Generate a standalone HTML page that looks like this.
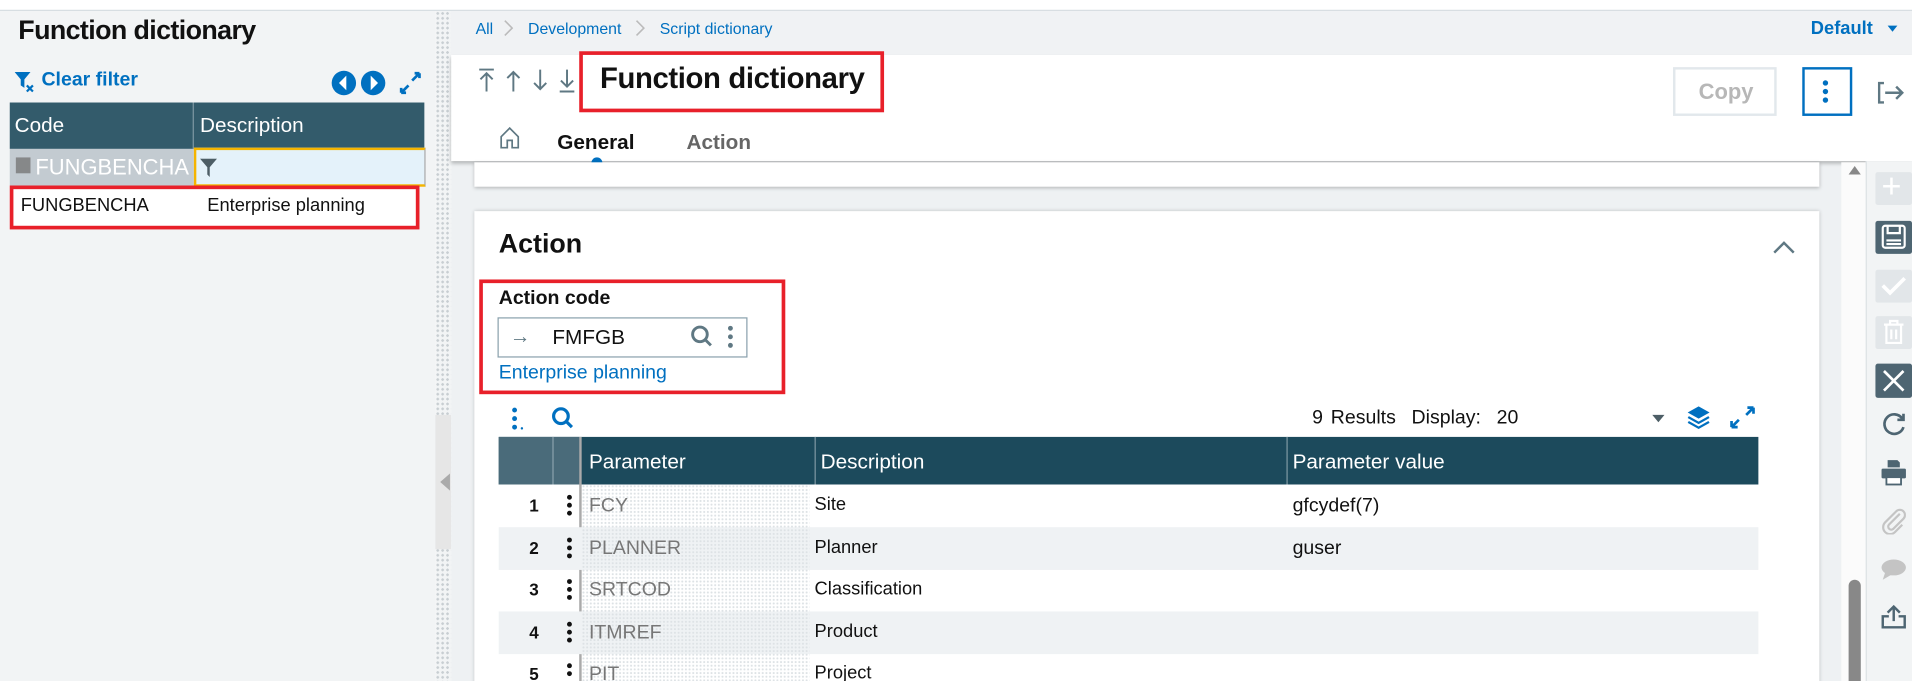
<!DOCTYPE html>
<html><head><meta charset="utf-8">
<style>
html,body{margin:0;padding:0;width:1912px;height:681px;overflow:hidden;background:#fff;font-family:"Liberation Sans",Arial,sans-serif;}
#w{position:absolute;left:0;top:0;width:1568px;height:558px;transform:scale(1.2194,1.2204);transform-origin:0 0;background:#fff;overflow:hidden;}
.a{position:absolute;}
.t{position:absolute;white-space:nowrap;}
</style></head><body><div id="w">
<div class="a" style="left:0;top:0;width:1568px;height:8px;background:#fff;border-bottom:1px solid #d6dde2"></div>
<div class="a" style="left:0;top:9px;width:357px;height:549px;background:#f2f4f5"></div>
<div class="t" style="left:15px;top:12px;font-size:22px;font-weight:bold;color:#111;letter-spacing:-0.5px">Function dictionary</div>
<svg class="a" style="left:12px;top:59px" width="18" height="18" viewBox="0 0 18 18"><path d="M0 0H13L8 6V13L5 11V6Z" fill="#0070c0"/><path d="M10 11l5 5M15 11l-5 5" stroke="#0070c0" stroke-width="1.8"/></svg>
<div class="t" style="left:34px;top:57px;font-size:16px;font-weight:bold;color:#0070c0">Clear filter</div>
<svg class="a" style="left:271px;top:57px" width="76" height="22" viewBox="0 0 76 22"><circle cx="11" cy="11" r="10" fill="#0070c0"/><path d="M13 5L7 11L13 17Z" fill="#fff"/><circle cx="35" cy="11" r="10" fill="#0070c0"/><path d="M33 5L39 11L33 17Z" fill="#fff"/><path d="M58 19L64 13M58 19V15M58 19H62M73 3L67 9M73 3V7M73 3H69" stroke="#0070c0" stroke-width="2.2" fill="none"/></svg>
<div class="a" style="left:8px;top:84px;width:340px;height:38px;background:#335b6b"></div>
<div class="a" style="left:158px;top:84px;width:1px;height:38px;background:#7e98a3"></div>
<div class="t" style="left:12px;top:93px;font-size:17px;color:#fff">Code</div>
<div class="t" style="left:164px;top:93px;font-size:17px;color:#fff">Description</div>
<div class="a" style="left:8px;top:122px;width:151px;height:30px;background:#c3cbd1"></div>
<div class="a" style="left:13px;top:129px;width:12px;height:13px;background:#777;opacity:.8"></div>
<div class="t" style="left:29px;top:127px;font-size:18px;color:#fff">FUNGBENCHA</div>
<div class="a" style="left:159px;top:121px;width:187px;height:28px;background:#e4f2fa;border:2px solid #f5b400;border-right:1px solid #aaa"></div>
<svg class="a" style="left:164px;top:130px" width="14" height="15" viewBox="0 0 14 15"><path d="M0 0H14L8 7V15L6 13V7Z" fill="#4d5e66"/></svg>
<div class="a" style="left:8px;top:152px;width:330px;height:30px;border:3px solid #e8202a;background:#fff"></div>
<div class="t" style="left:17px;top:160px;font-size:15px;color:#111">FUNGBENCHA</div>
<div class="t" style="left:170px;top:160px;font-size:15px;color:#111">Enterprise planning</div>
<div class="a" style="left:357px;top:9px;width:13px;height:549px;background:#f2f4f5;background-image:radial-gradient(#c8ced2 1px,transparent 1.2px);background-size:4px 4px"></div>
<div class="a" style="left:357px;top:340px;width:13px;height:110px;background:#e6e6e6"></div>
<div class="a" style="left:361px;top:388px;width:0;height:0;border-top:7px solid transparent;border-bottom:7px solid transparent;border-right:8px solid #aaa"></div>
<div class="a" style="left:370px;top:9px;width:1198px;height:549px;background:#eef1f3"></div>
<div class="a" style="left:370px;top:9px;width:1198px;height:36px;background:#f0f2f4"></div>
<div class="t" style="left:390px;top:16px;font-size:13px;color:#0070c0">All</div>
<svg class="a" style="left:413px;top:16px" width="8" height="14" viewBox="0 0 8 14" fill="none" stroke="#bbb" stroke-width="1.3"><path d="M1 1L7 7L1 13"/></svg>
<div class="t" style="left:433px;top:16px;font-size:13px;color:#0070c0">Development</div>
<svg class="a" style="left:521px;top:16px" width="8" height="14" viewBox="0 0 8 14" fill="none" stroke="#bbb" stroke-width="1.3"><path d="M1 1L7 7L1 13"/></svg>
<div class="t" style="left:541px;top:16px;font-size:13px;color:#0070c0">Script dictionary</div>
<div class="t" style="left:1485px;top:15px;font-size:15px;font-weight:bold;color:#0070c0">Default</div>
<div class="a" style="left:1548px;top:21px;border-left:4px solid transparent;border-right:4px solid transparent;border-top:5px solid #0070c0"></div>
<div class="a" style="left:370px;top:45px;width:1198px;height:87px;background:#fff;box-shadow:0 2px 3px rgba(0,0,0,.25)"></div>
<svg class="a" style="left:390px;top:55px" width="84" height="22" viewBox="0 0 84 22" fill="none" stroke="#5f7883" stroke-width="1.6"><path d="M3 2H15M9 20V5M4 10L9 5L14 10"/><path d="M31 20V4M26 9L31 4L36 9"/><path d="M53 2V18M48 13L53 18L58 13"/><path d="M75 2V16M70 11L75 16L80 11M69 20H81"/></svg>
<div class="a" style="left:475px;top:42px;width:244px;height:44px;border:3px solid #e8202a"></div>
<div class="t" style="left:492px;top:51px;font-size:24px;font-weight:bold;color:#111;letter-spacing:-0.3px">Function dictionary</div>
<div class="a" style="left:1372px;top:55px;width:81px;height:36px;border:2px solid #e2e8ec"></div>
<div class="t" style="left:1393px;top:65px;font-size:18px;font-weight:bold;color:#b7b7b7">Copy</div>
<div class="a" style="left:1478px;top:55px;width:37px;height:36px;border:2px solid #0070c0"></div>
<svg class="a" style="left:1494px;top:65px" width="6" height="20"><circle cx="3" cy="3" r="2.2" fill="#0070c0"/><circle cx="3" cy="10" r="2.2" fill="#0070c0"/><circle cx="3" cy="17" r="2.2" fill="#0070c0"/></svg>
<svg class="a" style="left:1540px;top:67px" width="22" height="18" viewBox="0 0 22 18" fill="none" stroke="#5f7883" stroke-width="2"><path d="M5 1H1V17H5M6 9H20M15 4L20 9L15 14"/></svg>
<svg class="a" style="left:410px;top:104px" width="16" height="18" viewBox="0 0 16 18" fill="none" stroke="#5f7883" stroke-width="1.4"><path d="M1 8L8 1L15 8V17H10V11H6V17H1Z"/></svg>
<div class="t" style="left:457px;top:107px;font-size:17px;font-weight:bold;color:#111">General</div>
<div class="t" style="left:563px;top:107px;font-size:17px;font-weight:bold;color:#666">Action</div>
<div class="a" style="left:485px;top:129px;width:9px;height:9px;border-radius:50%;background:#0070c0"></div>
<div class="a" style="left:389px;top:133px;width:1103px;height:20px;background:#fff;box-shadow:0 1px 3px rgba(0,0,0,.25)"></div>
<div class="a" style="left:389px;top:173px;width:1103px;height:390px;background:#fff;box-shadow:0 0 3px rgba(0,0,0,.2)"></div>
<div class="t" style="left:409px;top:187px;font-size:22px;font-weight:bold;color:#111">Action</div>
<svg class="a" style="left:1453px;top:197px" width="20" height="12" viewBox="0 0 20 12" fill="none" stroke="#5f7883" stroke-width="2"><path d="M2 10L10 2L18 10"/></svg>
<div class="a" style="left:393px;top:229px;width:245px;height:88px;border:3px solid #e8202a"></div>
<div class="t" style="left:409px;top:236px;font-size:16px;font-weight:bold;color:#111">Action code</div>
<div class="a" style="left:408px;top:260px;width:203px;height:31px;border:1px solid #8aa1ad"></div>
<div class="t" style="left:418px;top:266px;font-size:17px;color:#5f7883">→</div>
<div class="t" style="left:453px;top:267px;font-size:17px;color:#111">FMFGB</div>
<svg class="a" style="left:566px;top:266px" width="20" height="20" viewBox="0 0 20 20" fill="none" stroke="#5f7883" stroke-width="2.4"><circle cx="8" cy="8" r="6"/><path d="M12.5 12.5L17 17"/></svg>
<svg class="a" style="left:596px;top:266px" width="6" height="20"><circle cx="3" cy="3" r="2" fill="#5f7883"/><circle cx="3" cy="10" r="2" fill="#5f7883"/><circle cx="3" cy="17" r="2" fill="#5f7883"/></svg>
<div class="t" style="left:409px;top:297px;font-size:16px;color:#0070c0">Enterprise planning</div>
<svg class="a" style="left:418px;top:333px" width="12" height="20"><circle cx="4" cy="3" r="2" fill="#0070c0"/><circle cx="4" cy="10" r="2" fill="#0070c0"/><circle cx="4" cy="17" r="2" fill="#0070c0"/><circle cx="10" cy="18" r="1" fill="#0070c0"/></svg>
<svg class="a" style="left:452px;top:333px" width="20" height="20" viewBox="0 0 20 20" fill="none" stroke="#0070c0" stroke-width="2.6"><circle cx="8" cy="8" r="6"/><path d="M12.5 12.5L17 17"/></svg>
<div class="t" style="left:1076px;top:334px;font-size:16px;color:#111;word-spacing:2px">9 Results&nbsp; Display:&nbsp; 20</div>
<div class="a" style="left:1355px;top:340px;border-left:5px solid transparent;border-right:5px solid transparent;border-top:6px solid #4d5e66"></div>
<svg class="a" style="left:1383px;top:332px" width="20" height="20" viewBox="0 0 20 20" fill="#0070c0"><path d="M10 1L19 6L10 11L1 6Z"/><path d="M2 9L10 13.5L18 9L19 10.5L10 15.5L1 10.5Z"/><path d="M2 13L10 17.5L18 13L19 14.5L10 19.5L1 14.5Z"/></svg>
<svg class="a" style="left:1418px;top:332px" width="22" height="20" viewBox="0 0 22 20" fill="none" stroke="#0070c0" stroke-width="2.2"><path d="M2 18L8 12M2 18V13M2 18H7M20 2L14 8M20 2V7M20 2H15"/></svg>
<div class="a" style="left:409px;top:358px;width:1033px;height:39px;background:#1c4a5c"></div>
<div class="a" style="left:409px;top:358px;width:66px;height:39px;background:#4a6b7a"></div>
<div class="a" style="left:453px;top:358px;width:1px;height:39px;background:#8aa1ad"></div>
<div class="a" style="left:475px;top:358px;width:2px;height:200px;background:#aaa"></div>
<div class="a" style="left:668px;top:358px;width:1px;height:39px;background:#7e98a3"></div>
<div class="a" style="left:1055px;top:358px;width:1px;height:39px;background:#7e98a3"></div>
<div class="t" style="left:483px;top:369px;font-size:17px;color:#fff">Parameter</div>
<div class="t" style="left:673px;top:369px;font-size:17px;color:#fff">Description</div>
<div class="t" style="left:1060px;top:369px;font-size:17px;color:#fff">Parameter value</div>
<div class="a" style="left:409px;top:432px;width:1033px;height:35px;background:#eff2f4"></div>
<div class="a" style="left:409px;top:501px;width:1033px;height:35px;background:#eff2f4"></div>
<div class="a" style="left:477px;top:397px;width:187px;height:161px;background-image:radial-gradient(#dde2e5 0.7px,transparent 1px);background-size:3px 3px"></div>
<div class="t" style="left:434px;top:406px;font-size:14px;font-weight:bold;color:#111">1</div>
<div class="t" style="left:434px;top:441px;font-size:14px;font-weight:bold;color:#111">2</div>
<div class="t" style="left:434px;top:475px;font-size:14px;font-weight:bold;color:#111">3</div>
<div class="t" style="left:434px;top:510px;font-size:14px;font-weight:bold;color:#111">4</div>
<div class="t" style="left:434px;top:544px;font-size:14px;font-weight:bold;color:#111">5</div>
<svg class="a" style="left:464px;top:405px" width="6" height="150"><g fill="#111"><circle cx="3" cy="2.5" r="2"/><circle cx="3" cy="9" r="2"/><circle cx="3" cy="15.5" r="2"/><circle cx="3" cy="37.5" r="2"/><circle cx="3" cy="44" r="2"/><circle cx="3" cy="50.5" r="2"/><circle cx="3" cy="71.5" r="2"/><circle cx="3" cy="78" r="2"/><circle cx="3" cy="84.5" r="2"/><circle cx="3" cy="106.5" r="2"/><circle cx="3" cy="113" r="2"/><circle cx="3" cy="119.5" r="2"/><circle cx="3" cy="140.5" r="2"/><circle cx="3" cy="147" r="2"/></g></svg>
<div class="t" style="left:483px;top:406px;font-size:16px;color:#777">FCY</div>
<div class="t" style="left:483px;top:441px;font-size:16px;color:#777">PLANNER</div>
<div class="t" style="left:483px;top:475px;font-size:16px;color:#777">SRTCOD</div>
<div class="t" style="left:483px;top:510px;font-size:16px;color:#777">ITMREF</div>
<div class="t" style="left:483px;top:544px;font-size:16px;color:#777">PIT</div>
<div class="t" style="left:668px;top:405px;font-size:15px;color:#111">Site</div>
<div class="t" style="left:668px;top:440px;font-size:15px;color:#111">Planner</div>
<div class="t" style="left:668px;top:474px;font-size:15px;color:#111">Classification</div>
<div class="t" style="left:668px;top:509px;font-size:15px;color:#111">Product</div>
<div class="t" style="left:668px;top:543px;font-size:15px;color:#111">Project</div>
<div class="t" style="left:1060px;top:406px;font-size:16px;color:#111">gfcydef(7)</div>
<div class="t" style="left:1060px;top:441px;font-size:16px;color:#111">guser</div>
<div class="a" style="left:1510px;top:133px;width:20px;height:425px;background:#fbfbfb"></div>
<div class="a" style="left:1516px;top:136px;border-left:5px solid transparent;border-right:5px solid transparent;border-bottom:7px solid #888"></div>
<div class="a" style="left:1516px;top:475px;width:10px;height:90px;border-radius:5px;background:#888"></div>
<div class="a" style="left:1530px;top:132px;width:38px;height:426px;background:#f2f4f5;border-left:1px solid #dde2e5"></div>
<div class="a" style="left:1538px;top:141px;width:30px;height:27px;background:#e2e6e9;border-radius:2px"></div>
<div class="t" style="left:1543px;top:138px;font-size:28px;color:#fff;line-height:30px">+</div>
<div class="a" style="left:1538px;top:181px;width:30px;height:27px;background:#4e6572;border-radius:2px"></div>
<svg class="a" style="left:1543px;top:183px" width="20" height="22" viewBox="0 0 20 22" fill="none" stroke="#fff" stroke-width="1.8"><rect x="1" y="2" width="18" height="18" rx="2"/><path d="M5 2V8H15V2M4 14H16M4 17H16"/></svg>
<div class="a" style="left:1538px;top:221px;width:30px;height:27px;background:#e2e6e9;border-radius:2px"></div>
<svg class="a" style="left:1542px;top:225px" width="22" height="18" viewBox="0 0 22 18" fill="none" stroke="#fff" stroke-width="3"><path d="M2 9L8 15L20 3"/></svg>
<div class="a" style="left:1538px;top:259px;width:30px;height:27px;background:#e2e6e9;border-radius:2px"></div>
<svg class="a" style="left:1544px;top:261px" width="18" height="22" viewBox="0 0 18 22" fill="none" stroke="#fff" stroke-width="1.8"><path d="M1 5H17M6 5V2H12V5M3 5V20H15V5M7 9V17M11 9V17"/></svg>
<div class="a" style="left:1538px;top:298px;width:30px;height:28px;background:#4e6572;border-radius:2px"></div>
<svg class="a" style="left:1543px;top:302px" width="20" height="20" viewBox="0 0 20 20" stroke="#fff" stroke-width="2.2"><path d="M2 2L18 18M18 2L2 18"/></svg>
<svg class="a" style="left:1542px;top:337px" width="22" height="22" viewBox="0 0 22 22" fill="none" stroke="#4e6572" stroke-width="2.2"><path d="M18 6A8 8 0 1 0 19 13"/><path d="M19 2V7H14" /></svg>
<svg class="a" style="left:1542px;top:376px" width="22" height="22" viewBox="0 0 22 22" fill="#4e6572"><path d="M6 1H14L16 3V7H6Z"/><rect x="1" y="8" width="20" height="8" rx="1"/><rect x="5" y="15" width="12" height="6" fill="#fff" stroke="#4e6572" stroke-width="1.5"/></svg>
<svg class="a" style="left:1543px;top:416px" width="20" height="22" viewBox="0 0 20 22" fill="none" stroke="#c4c4c4" stroke-width="1.8"><path d="M15 5L6 14A2.5 2.5 0 0 0 9.5 17.5L18 9A4 4 0 0 0 12 3L3 12A5.5 5.5 0 0 0 11 20L17 14"/></svg>
<svg class="a" style="left:1542px;top:457px" width="22" height="20" viewBox="0 0 22 20" fill="#c4c4c4"><ellipse cx="11" cy="8" rx="10" ry="6.5"/><path d="M4 12L2 18L9 14Z"/></svg>
<svg class="a" style="left:1542px;top:494px" width="22" height="22" viewBox="0 0 22 22" fill="none" stroke="#4e6572" stroke-width="2"><path d="M11 15V3M6 8L11 3L16 8M7 11H2V20H20V11H15"/></svg>
</div></body></html>
